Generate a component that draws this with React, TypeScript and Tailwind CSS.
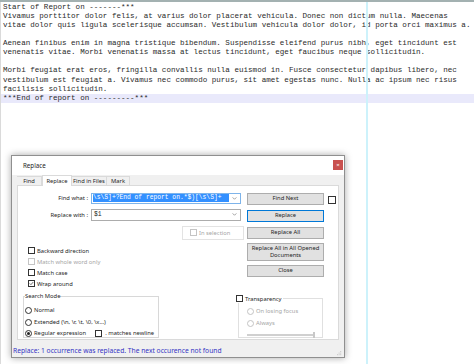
import React from "react";

const lines = [
  "Start of Report on -------***",
  "Vivamus porttitor dolor felis, at varius dolor placerat vehicula. Donec non dictum nulla. Maecenas",
  "vitae dolor quis ligula scelerisque accumsan. Vestibulum vehicula dolor dolor, id porta orci maximus a.",
  "",
  "Aenean finibus enim in magna tristique bibendum. Suspendisse eleifend purus nibh, eget tincidunt est",
  "venenatis vitae. Morbi venenatis massa at lectus tincidunt, eget faucibus neque sollicitudin.",
  "",
  "Morbi feugiat erat eros, fringilla convallis nulla euismod in. Fusce consectetur dapibus libero, nec",
  "vestibulum est feugiat a. Vivamus nec commodo purus, sit amet egestas nunc. Nulla ac ipsum nec risus",
  "facilisis sollicitudin.",
  "***End of report on ---------***",
];

function Check({ checked, disabled }: { checked?: boolean; disabled?: boolean }) {
  return (
    <span
      className={`flex w-[7px] h-[7px] shrink-0 border bg-white ${
        disabled ? "border-[#c4c4c4]" : "border-[#333]"
      }`}
    >
      {checked && (
        <svg viewBox="0 0 7 7" className="w-full h-full">
          <path d="M1 3.4 L2.7 5.1 L6 1.4" fill="none" stroke="#222" strokeWidth="0.9" />
        </svg>
      )}
    </span>
  );
}

function Radio({ checked, disabled }: { checked?: boolean; disabled?: boolean }) {
  return (
    <span
      className={`flex items-center justify-center w-[7px] h-[7px] shrink-0 rounded-full border bg-white ${
        disabled ? "border-[#c4c4c4]" : "border-[#333]"
      }`}
    >
      {checked && <span className="w-[3px] h-[3px] rounded-full bg-[#222]" />}
    </span>
  );
}

function Chevron() {
  return (
    <svg viewBox="0 0 6 4" className="w-[5px] h-[3px] shrink-0">
      <path d="M0.5 0.5 L3 3 L5.5 0.5" fill="none" stroke="#666" strokeWidth="0.8" />
    </svg>
  );
}

function Btn({ children, focused, h = "h-[12px]", mt }: { children: React.ReactNode; focused?: boolean; h?: string; mt: string }) {
  return (
    <div
      className={`flex items-center justify-center text-center leading-[7px] w-[77px] ${h} ${mt} bg-[#e1e1e1] border ${
        focused ? "border-[#0078d7]" : "border-[#adadad]"
      } text-[#1e1e1e]`}
    >
      {children}
    </div>
  );
}

function CheckRow({ label, checked, disabled }: { label: string; checked?: boolean; disabled?: boolean }) {
  return (
    <div className="flex items-center h-[11px] pl-[10px] gap-[2px]">
      <Check checked={checked} disabled={disabled} />
      <span className={disabled ? "text-[#a6a6a6]" : "text-[#1e1e1e]"}>{label}</span>
    </div>
  );
}

function ReplaceDialog() {
  return (
    <div className="absolute left-[11px] top-[155px] w-[334px] h-[203px] flex flex-col bg-[#f0f0f0] border border-[#8f8f8f] shadow-[0_0_7px_rgba(0,0,0,0.35)] font-['Noto_Sans',sans-serif] text-[5.8px] whitespace-nowrap text-[#1e1e1e]">
      <div className="h-[19px] bg-white flex items-center justify-between pl-[11px] pr-[1px]">
        <span className="text-[6.2px]">Replace</span>
        <div className="w-[10px] h-[10px] mb-[1px] bg-[#c9514f] flex items-center justify-center text-white text-[6px] leading-none">
          ×
        </div>
      </div>

      <div className="flex items-end h-[10px] pl-[5px]">
        <div className="w-[25px] h-[9px] flex items-center justify-center border-t border-r border-[#dadada]">Find</div>
        <div className="w-[30px] h-[11px] -mb-[1px] flex items-center justify-center bg-white border-t border-x border-[#dadada] relative z-10">
          Replace
        </div>
        <div className="w-[35px] h-[9px] flex items-center justify-center border-t border-r border-[#dadada]">Find in Files</div>
        <div className="w-[23px] h-[9px] flex items-center justify-center border-t border-r border-[#dadada]">Mark</div>
      </div>

      <div className="mx-[5px] h-[156px] bg-white border border-[#dadada]">
        <div className="flex">
          <div className="w-[229px] flex flex-col">
            <div className="flex items-center mt-[7px] h-[11px]">
              <span className="w-[70px] text-right">Find what :</span>
              <div className="ml-[3px] w-[150px] h-[11px] flex items-center border border-[#7eb4ea] pl-[1px] pr-[3px]">
                <div className="flex-1 h-[8px] bg-[#3390ff] text-white font-['Liberation_Mono',monospace] text-[6.3px] leading-[8px] whitespace-nowrap overflow-hidden">
                  \s\S]+?End of report on.*$)[\s\S]+
                </div>
                <span className="ml-[3px]">
                  <Chevron />
                </span>
              </div>
            </div>
            <div className="flex items-center mt-[5px] h-[12px]">
              <span className="w-[70px] text-right">Replace with :</span>
              <div className="ml-[3px] w-[150px] h-[12px] flex items-center border border-[#acacac] pl-[2px] pr-[3px]">
                <span className="flex-1 font-['Liberation_Mono',monospace] text-[6.3px]">$1</span>
                <Chevron />
              </div>
            </div>
            <div className="mt-[5px] ml-[164px] w-[62px] h-[14px] border border-[#e3e3e3] flex items-center pl-[7px] gap-[2px]">
              <Check disabled />
              <span className="text-[#a6a6a6]">In selection</span>
            </div>
            <div className="mt-[5.5px] flex flex-col">
              <CheckRow label="Backward direction" />
              <CheckRow label="Match whole word only" disabled />
              <CheckRow label="Match case" />
              <CheckRow label="Wrap around" checked />
            </div>
          </div>

          <div className="flex flex-col">
            <Btn mt="mt-[7px]">Find Next</Btn>
            <Btn mt="mt-[5px]" focused>
              Replace
            </Btn>
            <Btn mt="mt-[5px]">Replace All</Btn>
            <Btn mt="mt-[4px]" h="h-[18px]">
              Replace All in All Opened
              <br />
              Documents
            </Btn>
            <Btn mt="mt-[4px]">Close</Btn>
          </div>
          <div className="ml-[4px] mt-[10px]">
            <span className="flex w-[8px] h-[8px] border border-[#333] bg-white" />
          </div>
        </div>

        <div className="flex items-start">
          <div className="relative mt-[6.5px] ml-[5px] w-[136px] h-[42px] border border-[#d8d8d8] pt-[8px] pl-[1px]">
            <span className="absolute -top-[5px] left-[1px] bg-white leading-[8px]">Search Mode</span>
            <div className="flex items-center h-[11.5px] gap-[2px]">
              <Radio />
              <span>Normal</span>
            </div>
            <div className="flex items-center h-[11.5px] gap-[2px]">
              <Radio />
              <span>Extended (\n, \r, \t, \0, \x...)</span>
            </div>
            <div className="flex items-center h-[11.5px] gap-[2px]">
              <Radio checked />
              <span>Regular expression</span>
              <span className="ml-[7px]">
                <Check />
              </span>
              <span className="ml-[1px]">. matches newline</span>
            </div>
          </div>

          <div className="relative mt-[8.5px] ml-[79px] w-[85px] h-[40px] border border-[#e0e0e0] pt-[7px] pl-[8px]">
            <div className="absolute -top-[4px] -left-[3px] flex items-center gap-[2px] bg-white pr-[1px]">
              <Check />
              <span className="leading-[8px]">Transparency</span>
            </div>
            <div className="flex items-center h-[11.5px] gap-[2px] text-[#a6a6a6]">
              <Radio disabled />
              <span>On losing focus</span>
            </div>
            <div className="flex items-center h-[11.5px] gap-[2px] text-[#a6a6a6]">
              <Radio disabled />
              <span>Always</span>
            </div>
            <div className="flex items-center mt-[3px] w-[68px]">
              <div className="flex-1 h-[2px] bg-[#dcdcdc] border border-[#d0d0d0]" />
              <div className="w-[2px] h-[6px] bg-[#c8c8c8]" />
            </div>
          </div>
        </div>
      </div>

      <div className="flex items-center justify-between mt-[5px] h-[12px] pl-[1px] pr-[2px]">
        <span className="text-[6.7px] text-[#3434c4]">Replace: 1 occurrence was replaced. The next occurence not found</span>
        <svg viewBox="0 0 6 6" className="w-[5px] h-[5px] self-end mb-[1px]">
          <rect x="4" y="0" width="1" height="1" fill="#b5b5b5" />
          <rect x="2" y="2" width="1" height="1" fill="#b5b5b5" />
          <rect x="4" y="2" width="1" height="1" fill="#b5b5b5" />
          <rect x="0" y="4" width="1" height="1" fill="#b5b5b5" />
          <rect x="2" y="4" width="1" height="1" fill="#b5b5b5" />
          <rect x="4" y="4" width="1" height="1" fill="#b5b5b5" />
        </svg>
      </div>
    </div>
  );
}

export default function App() {
  return (
    <div className="relative w-[474px] h-[364px] overflow-hidden bg-white">
      <div className="h-[2px] bg-[#a3b1b1]" />
      <div className="h-[362px] border-l border-[#dadada] pt-[0.5px] font-['Liberation_Mono',monospace] text-[7.57px] leading-[9.13px] text-[#2a2a2a]">
        {lines.map((l, i) => (
          <div key={i} className={`h-[9.13px] pl-[2px] whitespace-pre ${i === lines.length - 1 ? "bg-[#e9e9fb]" : ""}`}>
            {l}
          </div>
        ))}
      </div>
      <div className="absolute left-[366px] top-[2px] bottom-0 w-[2px] bg-[#cdf2fb]" />
      <ReplaceDialog />
    </div>
  );
}
